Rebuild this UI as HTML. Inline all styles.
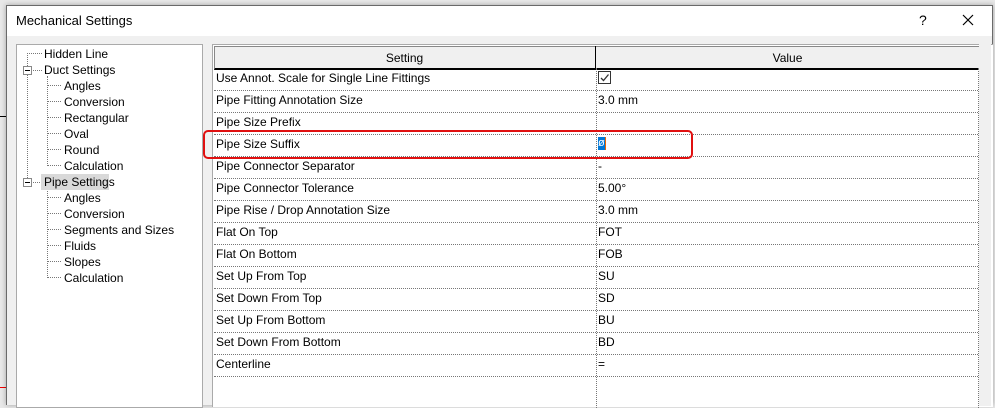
<!DOCTYPE html><html><head><style>
body{margin:0;width:995px;height:404px;overflow:hidden;background:#e8e8e8;position:relative;font-family:"Liberation Sans",sans-serif;font-size:12px;color:#000}
.a{position:absolute}
.t{position:absolute;white-space:nowrap;line-height:14px}
.dh{position:absolute;height:0;border-top:1px dotted #777}
.dv{position:absolute;width:0;border-left:1px dotted #777}
</style></head><body>
<div class="a" style="left:0;top:116px;width:7px;height:1px;background:#000"></div>
<div class="a" style="left:0;top:387px;width:7px;height:1px;background:#e00"></div>
<div class="a" style="left:6px;top:5px;width:985px;height:399px;background:#f0f0f0;border:1px solid #6a6a6a;border-bottom:none;box-shadow:0 0 5px rgba(0,0,0,.3)"></div>
<div class="a" style="left:7px;top:6px;width:985px;height:30px;background:#fff"></div>
<div class="t" style="left:16px;top:14px;font-size:13px">Mechanical Settings</div>
<div class="t" style="left:919px;top:13px;font-size:14px">?</div>
<svg class="a" style="left:962px;top:14px" width="12" height="12"><path d="M1 1L11 11M11 1L1 11" stroke="#000" stroke-width="1.2"/></svg>
<!-- tree -->
<div class="a" style="left:16px;top:44px;width:185px;height:362px;background:#fff;border:1px solid #aaa"></div>
<div class="dv" style="left:27px;top:53px;height:129px"></div>
<div class="dh" style="left:27px;top:53px;width:15px"></div>
<div class="dh" style="left:27px;top:70px;width:15px"></div>
<div class="dh" style="left:27px;top:182px;width:15px"></div>
<div class="dv" style="left:47px;top:76px;height:90px"></div>
<div class="dv" style="left:47px;top:188px;height:90px"></div>
<div class="a" style="left:23px;top:66px;width:7px;height:7px;border:1px solid #888;background:#fff"></div>
<div class="a" style="left:25px;top:70px;width:5px;height:1px;background:#000"></div>
<div class="a" style="left:23px;top:178px;width:7px;height:7px;border:1px solid #888;background:#fff"></div>
<div class="a" style="left:25px;top:182px;width:5px;height:1px;background:#000"></div>
<div class="a" style="left:41px;top:174px;width:68px;height:16px;background:#d9d9d9"></div>
<div class="t" style="left:44px;top:47px">Hidden Line</div>
<div class="t" style="left:44px;top:63px">Duct Settings</div>
<div class="t" style="left:44px;top:175px">Pipe Settings</div>
<div id="tr"></div>
<!-- grid -->
<div class="a" style="left:212px;top:44px;width:780px;height:362px;background:#fff;border-left:1px solid #aaa;border-top:1px solid #aaa"></div>
<div class="a" style="left:214px;top:46px;width:764px;height:21px;background:#f0f0f0;border:1px solid #888;border-bottom:2px solid #000"></div>
<div class="a" style="left:595px;top:46px;width:1px;height:22px;background:#000"></div>
<div class="t" style="left:214px;top:51px;width:381px;text-align:center">Setting</div>
<div class="t" style="left:596px;top:51px;width:383px;text-align:center">Value</div>
<div class="dv" style="left:596px;top:68px;height:340px"></div>
<div class="dv" style="left:978px;top:68px;height:340px"></div>
<div class="a" style="left:979px;top:44px;width:12px;height:362px;background:#f0f0f0"></div>
<div id="rows"></div>
<svg class="a" style="left:598px;top:71px" width="14" height="14"><rect x=".5" y=".5" width="12" height="12" fill="#fff" stroke="#333"/><path d="M3 7l2.5 2.5L10.5 3.5" fill="none" stroke="#333" stroke-width="1.3"/></svg>
<div class="a" style="left:598px;top:137px;width:7px;height:13px;background:#0078d7;color:#fff;font-size:11px;line-height:13px">ø</div>
<div class="a" style="left:605px;top:137px;width:1px;height:13px;background:#e60"></div>
<div class="a" style="left:203px;top:130px;width:486px;height:25px;border:2px solid #e01010;border-radius:5px"></div>
<script>
var tr=[["Angles",78],["Conversion",94],["Rectangular",110],["Oval",126],["Round",142],["Calculation",158],["Angles",190],["Conversion",206],["Segments and Sizes",222],["Fluids",238],["Slopes",254],["Calculation",270]];
var h="";tr.forEach(function(x){h+='<div class="dh" style="left:47px;top:'+(x[1]+7)+'px;width:14px"></div><div class="t" style="left:64px;top:'+(x[1]+1)+'px">'+x[0]+'</div>';});
document.getElementById("tr").outerHTML=h;
var r=[["Use Annot. Scale for Single Line Fittings",""],["Pipe Fitting Annotation Size","3.0 mm"],["Pipe Size Prefix",""],["Pipe Size Suffix",""],["Pipe Connector Separator","-"],["Pipe Connector Tolerance","5.00°"],["Pipe Rise / Drop Annotation Size","3.0 mm"],["Flat On Top","FOT"],["Flat On Bottom","FOB"],["Set Up From Top","SU"],["Set Down From Top","SD"],["Set Up From Bottom","BU"],["Set Down From Bottom","BD"],["Centerline","="]];
h="";r.forEach(function(x,i){var y=68+22*i;h+='<div class="t" style="left:216px;top:'+(y+3)+'px">'+x[0]+'</div><div class="t" style="left:598px;top:'+(y+3)+'px">'+x[1]+'</div><div class="dh" style="left:214px;top:'+(y+22)+'px;width:764px"></div>';});
document.getElementById("rows").outerHTML=h;
</script>
</body></html>
